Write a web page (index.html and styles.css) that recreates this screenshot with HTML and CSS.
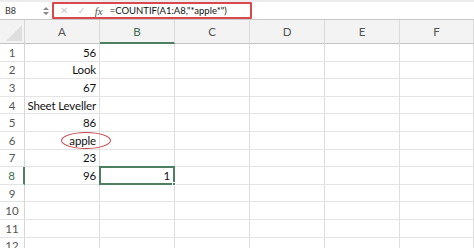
FILE: index.html
```html
<!DOCTYPE html>
<html lang="en">
<head>
  <meta charset="UTF-8" />
  <title>COUNTIF apple</title>
  <link rel="stylesheet" href="styles.css">
</head>
<body>
  <div class="formula-bar">
    <div class="name-box">B8</div>
    <div class="spin">
      <svg width="6" height="10" viewBox="0 0 6 10"><path d="M0 4 L3 1 L6 4 Z M0 6 L3 9 L6 6 Z" fill="#888"/></svg>
    </div>
    <div class="highlight">
      <span class="fbtn cancel">&#x2715;</span>
      <span class="fbtn ok">&#x2713;</span>
      <span class="fx">fx</span>
      <span class="formula">=COUNTIF(A1:A8,"*apple*")</span>
    </div>
    <div class="input-rest"></div>
  </div>

  <div class="sheet">
    <div class="corner"><span class="tri"></span></div>
    <div class="col-head">A</div>
    <div class="col-head active">B</div>
    <div class="col-head">C</div>
    <div class="col-head">D</div>
    <div class="col-head">E</div>
    <div class="col-head">F</div>

    <div class="row-head">1</div><div class="cell num">56</div><div class="cell"></div><div class="cell"></div><div class="cell"></div><div class="cell"></div><div class="cell"></div>
    <div class="row-head">2</div><div class="cell num">Look</div><div class="cell"></div><div class="cell"></div><div class="cell"></div><div class="cell"></div><div class="cell"></div>
    <div class="row-head">3</div><div class="cell num">67</div><div class="cell"></div><div class="cell"></div><div class="cell"></div><div class="cell"></div><div class="cell"></div>
    <div class="row-head">4</div><div class="cell num">Sheet Leveller</div><div class="cell"></div><div class="cell"></div><div class="cell"></div><div class="cell"></div><div class="cell"></div>
    <div class="row-head">5</div><div class="cell num">86</div><div class="cell"></div><div class="cell"></div><div class="cell"></div><div class="cell"></div><div class="cell"></div>
    <div class="row-head">6</div><div class="cell num circled">apple<span class="ring"></span></div><div class="cell"></div><div class="cell"></div><div class="cell"></div><div class="cell"></div><div class="cell"></div>
    <div class="row-head">7</div><div class="cell num">23</div><div class="cell"></div><div class="cell"></div><div class="cell"></div><div class="cell"></div><div class="cell"></div>
    <div class="row-head active">8</div><div class="cell num">96</div><div class="cell num selected">1<span class="handle"></span></div><div class="cell"></div><div class="cell"></div><div class="cell"></div><div class="cell"></div>
    <div class="row-head">9</div><div class="cell"></div><div class="cell"></div><div class="cell"></div><div class="cell"></div><div class="cell"></div><div class="cell"></div>
    <div class="row-head">10</div><div class="cell"></div><div class="cell"></div><div class="cell"></div><div class="cell"></div><div class="cell"></div><div class="cell"></div>
    <div class="row-head">11</div><div class="cell"></div><div class="cell"></div><div class="cell"></div><div class="cell"></div><div class="cell"></div><div class="cell"></div>
    <div class="row-head">12</div><div class="cell"></div><div class="cell"></div><div class="cell"></div><div class="cell"></div><div class="cell"></div><div class="cell"></div>
  </div>
</body>
</html>
```

FILE: styles.css
```css
* {
  box-sizing: border-box;
  margin: 0;
  padding: 0;
}
body {
  background: #fff;
  font-family: 'Lato', 'Liberation Sans', sans-serif;
  width: 474px;
  height: 248px;
  overflow: hidden;
}
.formula-bar {
  display: flex;
  align-items: center;
  height: 20px;
  background: #fff;
  border-top: 2px solid #ececec;
  border-bottom: 1px solid #c8c8c8;
}
.name-box {
  width: 40px;
  padding-left: 5px;
  font-size: 9px;
  color: #333;
}
.spin {
  width: 12px;
  display: flex;
  justify-content: center;
}
.highlight {
  display: flex;
  align-items: center;
  width: 200px;
  height: 17px;
  border: 2px solid #d9484c;
  border-radius: 1px;
}
.fbtn {
  color: #c9c9c9;
  font-size: 10px;
  font-family: 'DejaVu Sans', sans-serif;
}
.cancel {
  margin-left: 6px;
}
.ok {
  margin-left: 9px;
}
.fx {
  margin-left: 9px;
  font-family: 'Liberation Serif', serif;
  font-style: italic;
  font-size: 11px;
  color: #555;
}
.formula {
  margin-left: 7px;
  font-size: 9.5px;
  color: #111;
  white-space: nowrap;
}
.input-rest {
  flex: 1;
}
.sheet {
  display: grid;
  grid-template-columns: 25px repeat(5, 75px) 1fr;
  grid-template-rows: 24px repeat(12, 17.6px);
}
.corner {
  position: relative;
  background: #f3f3f3;
  border-right: 1px solid #d6d6d6;
  border-bottom: 1px solid #c4c4c4;
}
.tri {
  position: absolute;
  right: 2px;
  bottom: 2px;
  width: 0;
  height: 0;
  border-left: 16px solid transparent;
  border-bottom: 16px solid #dedede;
}
.col-head {
  background: #f3f3f3;
  border-right: 1px solid #dadada;
  border-bottom: 1px solid #c4c4c4;
  display: flex;
  align-items: center;
  justify-content: center;
  font-size: 11.5px;
  color: #555;
}
.col-head.active {
  color: #3f6e50;
  border-bottom: 2px solid #4e7f60;
}
.row-head {
  background: #fff;
  border-right: 1px solid #d6d6d6;
  border-bottom: 1px solid #e4e4e4;
  display: flex;
  align-items: center;
  justify-content: center;
  font-size: 11.5px;
  color: #555;
}
.row-head.active {
  color: #3f6e50;
  border-right: 2px solid #4e7f60;
}
.cell {
  border-right: 1px solid #dedede;
  border-bottom: 1px solid #e4e4e4;
  display: flex;
  align-items: center;
  font-size: 11.5px;
  letter-spacing: -0.15px;
  color: #111;
  white-space: nowrap;
}
.cell.num {
  justify-content: flex-end;
  padding-right: 3px;
}
.circled {
  position: relative;
}
.ring {
  position: absolute;
  left: 36px;
  top: 0;
  width: 50px;
  height: 17px;
  border: 1.5px solid #c8454a;
  border-radius: 50%;
}
.selected {
  position: relative;
  border: 2px solid #4e7f60;
  margin-top: -1px;
  margin-left: -1px;
}
.handle {
  position: absolute;
  right: -3px;
  bottom: -3px;
  width: 4px;
  height: 4px;
  background: #4e7f60;
  border: 1px solid #fff;
}
```
